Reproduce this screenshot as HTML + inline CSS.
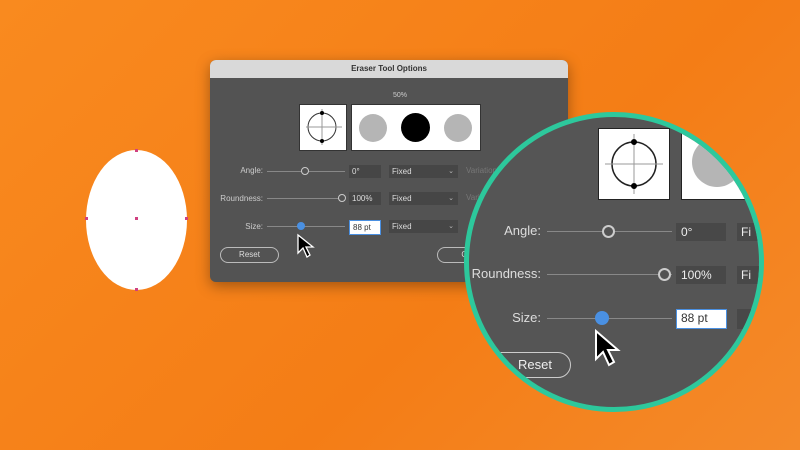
<!DOCTYPE html>
<html><head><style>
body{margin:0;width:800px;height:450px;overflow:hidden;background:linear-gradient(135deg,#f98a1f,#f47d16 60%,#f48a2a);font-family:"Liberation Sans",sans-serif;position:relative}
.a{position:absolute}
.dlg{left:210px;top:60px;width:358px;height:222px;background:#535353;border-radius:6px;overflow:hidden;box-shadow:0 4px 14px rgba(0,0,0,.35)}
.tb{left:0;top:0;width:100%;height:18px;background:#d9d9d9;color:#333;font-size:8px;font-weight:bold;text-align:center;line-height:18px}
.lbl{color:#ccc;font-size:8px;text-align:right}
.ln{height:1px;background:#888}
.fld{background:#464646;color:#ddd;font-size:8px;line-height:13px;padding-left:3px;box-sizing:border-box}
.fld i{position:absolute;right:4px;top:0;font-style:normal;font-size:7px;color:#bbb}
.knob{border:1px solid #ccc;border-radius:50%;box-sizing:border-box;background:#535353}
.btn{border:1px solid #bbb;border-radius:10px;color:#ddd;font-size:8px;text-align:center;box-sizing:border-box}
.pt{position:absolute;width:3px;height:3px;background:#d04080}
</style></head><body>
<div class="a" style="left:86px;top:150px;width:101px;height:140px;border-radius:50%;background:#fff"></div>
<div class="pt" style="left:135px;top:217px"></div><div class="pt" style="left:135px;top:149px"></div><div class="pt" style="left:135px;top:288px"></div><div class="pt" style="left:85px;top:217px"></div><div class="pt" style="left:185px;top:217px"></div>
<div class="dlg a">
<div class="tb a">Eraser Tool Options</div>
<div class="a" style="left:183px;top:32px;color:#ccc;font-size:7px">50%</div>
<div class="a" style="left:89px;top:44px;width:46px;height:45px;background:#fff;border:1px solid #333">
<svg width="46" height="45"><circle cx="22" cy="22" r="14" fill="none" stroke="#333"/><line x1="6" y1="22" x2="42" y2="22" stroke="#999"/><line x1="22" y1="4" x2="22" y2="40" stroke="#999"/><circle cx="22" cy="8" r="2"/><circle cx="22" cy="36" r="2"/></svg></div>
<div class="a" style="left:141px;top:44px;width:128px;height:45px;background:#fff;border:1px solid #333">
<div class="a" style="left:7px;top:9px;width:28px;height:28px;border-radius:50%;background:#b5b5b5"></div>
<div class="a" style="left:49px;top:8px;width:29px;height:29px;border-radius:50%;background:#000"></div>
<div class="a" style="left:92px;top:9px;width:28px;height:28px;border-radius:50%;background:#b5b5b5"></div></div>
<div class="a lbl" style="left:0;top:106px;width:53px">Angle:</div>
<div class="a ln" style="left:57px;top:111px;width:78px"></div><div class="a knob" style="left:91px;top:107px;width:8px;height:8px"></div>
<div class="a fld" style="left:139px;top:105px;width:32px">0°</div>
<div class="a fld" style="left:179px;top:105px;width:69px">Fixed<i>⌄</i></div>
<div class="a" style="left:256px;top:106px;color:#777;font-size:8px">Variation</div>
<div class="a lbl" style="left:0;top:134px;width:53px">Roundness:</div>
<div class="a ln" style="left:57px;top:138px;width:78px"></div><div class="a knob" style="left:128px;top:134px;width:8px;height:8px"></div>
<div class="a fld" style="left:139px;top:132px;width:32px">100%</div>
<div class="a fld" style="left:179px;top:132px;width:69px">Fixed<i>⌄</i></div>
<div class="a" style="left:256px;top:133px;color:#777;font-size:8px">Variation</div>
<div class="a lbl" style="left:0;top:162px;width:53px">Size:</div>
<div class="a ln" style="left:57px;top:166px;width:78px"></div><div class="a" style="left:87px;top:162px;width:8px;height:8px;border-radius:50%;background:#4a90e2"></div>
<div class="a fld" style="left:139px;top:160px;width:32px;background:#fff;color:#333;border:1px solid #4a90e2">88 pt</div>
<div class="a fld" style="left:179px;top:160px;width:69px">Fixed<i>⌄</i></div>
<div class="a btn" style="left:10px;top:187px;width:59px;height:16px;line-height:14px">Reset</div>
<div class="a btn" style="left:227px;top:187px;width:59px;height:16px;line-height:14px">Ca</div>
</div>
<svg class="a" style="left:296px;top:233px" width="20" height="26"><path d="M2 2 L2 20 L7 15 L11 24 L14 22 L10 14 L17 14 Z" fill="#000" stroke="#fff" stroke-width="1.3"/></svg>
<div class="a" style="left:464px;top:112px;width:300px;height:300px;border-radius:50%;background:#555;box-sizing:border-box;border:5px solid #2dc89c;overflow:hidden">
<div class="a" style="left:129px;top:11px;width:70px;height:70px;background:#fff;border:1px solid #222">
<svg width="70" height="70"><circle cx="35" cy="35" r="22" fill="none" stroke="#222" stroke-width="1.5"/><line x1="6" y1="35" x2="64" y2="35" stroke="#999"/><line x1="35" y1="5" x2="35" y2="65" stroke="#999"/><circle cx="35" cy="13" r="3"/><circle cx="35" cy="57" r="3"/></svg></div>
<div class="a" style="left:212px;top:11px;width:80px;height:70px;background:#fff;border:1px solid #222"><div class="a" style="left:10px;top:8px;width:50px;height:50px;border-radius:50%;background:#b5b5b5"></div></div>
<div class="a" style="left:0;top:106px;width:72px;text-align:right;color:#ddd;font-size:13px">Angle:</div>
<div class="a ln" style="left:78px;top:114px;width:125px"></div><div class="a knob" style="left:133px;top:108px;width:13px;height:13px;border-width:2px"></div>
<div class="a" style="left:207px;top:106px;width:50px;height:18px;background:#484848;color:#eee;font-size:12px;line-height:18px;padding-left:5px;box-sizing:border-box">0°</div>
<div class="a" style="left:268px;top:106px;width:30px;height:18px;background:#484848;color:#eee;font-size:12px;line-height:18px;padding-left:4px">Fi</div>
<div class="a" style="left:0;top:149px;width:72px;text-align:right;color:#ddd;font-size:13px">Roundness:</div>
<div class="a ln" style="left:78px;top:157px;width:125px"></div><div class="a knob" style="left:189px;top:151px;width:13px;height:13px;border-width:2px"></div>
<div class="a" style="left:207px;top:149px;width:50px;height:18px;background:#484848;color:#eee;font-size:12px;line-height:18px;padding-left:5px;box-sizing:border-box">100%</div>
<div class="a" style="left:268px;top:149px;width:30px;height:18px;background:#484848;color:#eee;font-size:12px;line-height:18px;padding-left:4px">Fi</div>
<div class="a" style="left:0;top:193px;width:72px;text-align:right;color:#ddd;font-size:13px">Size:</div>
<div class="a ln" style="left:78px;top:201px;width:125px"></div><div class="a" style="left:126px;top:194px;width:14px;height:14px;border-radius:50%;background:#4a90e2"></div>
<div class="a" style="left:207px;top:192px;width:51px;height:20px;background:#fff;border:1.5px solid #4a90e2;color:#333;font-size:12px;line-height:17px;padding-left:4px;box-sizing:border-box">88 pt</div>
<div class="a" style="left:268px;top:192px;width:30px;height:20px;background:#484848"></div>
<div class="a" style="left:10px;top:235px;width:92px;height:26px;border:1.5px solid #ccc;border-radius:13px;color:#eee;font-size:13px;line-height:24px;text-align:right;padding-right:18px;box-sizing:border-box">Reset</div>
</div>
<svg class="a" style="left:593px;top:328px" width="30" height="40"><path d="M3 3 L3 31 L10 24 L16 37 L21 34 L15 22 L25 22 Z" fill="#000" stroke="#fff" stroke-width="2"/></svg>
</body></html>
